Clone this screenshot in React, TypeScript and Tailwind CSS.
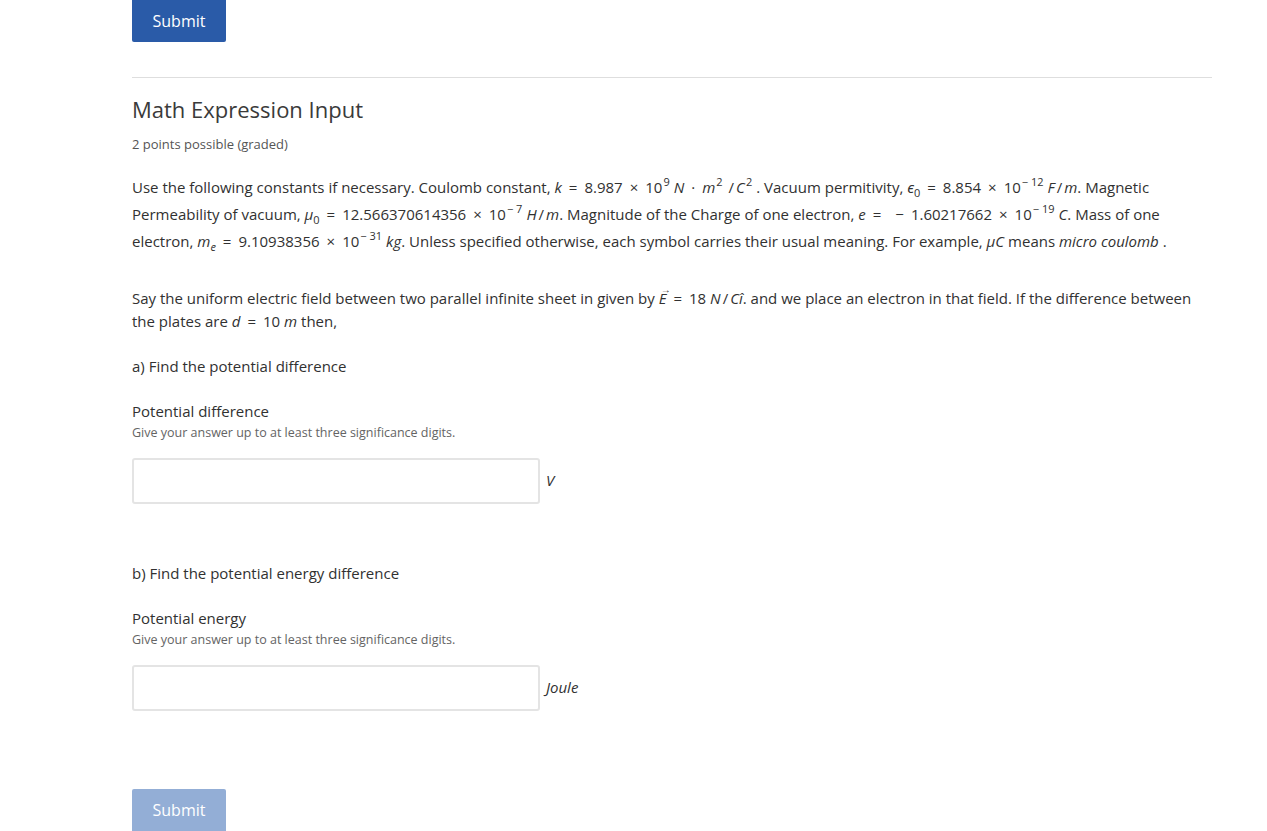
import React from 'react';

type C = { children: React.ReactNode };

const I: React.FC<C> = ({ children }) => <i className="italic">{children}</i>;
const Sup: React.FC<C> = ({ children }) => (
  <span className="inline-block text-[11px] leading-none align-[7px] ml-[1px] mr-[4px]">{children}</span>
);
const Sub: React.FC<C> = ({ children }) => (
  <span className="inline-block text-[11px] leading-none align-[-4px]">{children}</span>
);
const Op: React.FC<C> = ({ children }) => <span className="mx-[7px]">{children}</span>;
const Sl: React.FC = () => <span className="mx-[2px]">/</span>;
const Vec: React.FC<C> = ({ children }) => (
  <span className="relative inline-block italic">
    {children}
    <span className="absolute left-[2px] -top-[9px] text-[10px] not-italic">→</span>
  </span>
);

const AnswerField: React.FC<{ label: string; unit: string }> = ({ label, unit }) => (
  <div>
    <div className="text-[15px] leading-[20px] text-[#313131]">{label}</div>
    <div className="mt-[4px] text-[12.5px] leading-[16px] text-[#646464]">Give your answer up to at least three significance digits.</div>
    <div className="flex items-center mt-[17px]">
      <div className="w-[408px] h-[46px] border-2 border-[#e4e4e4] rounded-[3px] bg-white" />
      <span className="ml-[6px] text-[15px] italic text-[#313131]">{unit}</span>
    </div>
  </div>
);

const App: React.FC = () => {
  return (
    <div className="min-h-[831px] bg-white text-[#313131] font-['Open_Sans','Noto_Sans',sans-serif]">
      <div className="pl-[132px] pr-[55px]">
        <button className="w-[94px] h-[42px] bg-[#2a5ba8] text-white text-[16px] rounded-b-[2px]">Submit</button>
        <div className="mt-[35px] border-t border-[#dedede]" />

        <h2 className="mt-[16px] text-[22px] leading-[30px] text-[#3a3a3a]">Math Expression Input</h2>
        <div className="mt-[11px] text-[13px] text-[#555]">2 points possible (graded)</div>

        <p className="mt-[19px] text-[15px] leading-[27px]">
          Use the following constants if necessary. Coulomb constant, <I>k</I><Op>=</Op>8.987<Op>×</Op>10<Sup>9</Sup><I>N</I><Op>·</Op><I>m</I><Sup>2</Sup><Sl /><I>C</I><Sup>2</Sup>. Vacuum permitivity, <I>ϵ</I><Sub>0</Sub><Op>=</Op>8.854<Op>×</Op>10<Sup>− 12</Sup><I>F</I><Sl /><I>m</I>. Magnetic Permeability of vacuum, <I>μ</I><Sub>0</Sub><Op>=</Op>12.566370614356<Op>×</Op>10<Sup>− 7</Sup><I>H</I><Sl /><I>m</I>. Magnitude of the Charge of one electron, <I>e</I><Op>=</Op><Op>−</Op>1.60217662<Op>×</Op>10<Sup>− 19</Sup><I>C</I>. Mass of one electron, <I>m</I><Sub><I>e</I></Sub><Op>=</Op>9.10938356<Op>×</Op>10<Sup>− 31</Sup><I>kg</I>. Unless specified otherwise, each symbol carries their usual meaning. For example, <I>μC</I> means <I>micro coulomb</I> .
        </p>

        <p className="mt-[32px] text-[15px] leading-[23px]">
          Say the uniform electric field between two parallel infinite sheet in given by <Vec>E</Vec><Op>=</Op>18 <I>N</I><Sl /><I>Cî</I>. and we place an electron in that field. If the difference between the plates are <I>d</I><Op>=</Op>10 <I>m</I> then,
        </p>

        <p className="mt-[22px] text-[15px] leading-[23px]">a) Find the potential difference</p>

        <div className="mt-[23px]">
          <AnswerField label="Potential difference" unit="V" />
        </div>

        <p className="mt-[58px] text-[15px] leading-[23px]">b) Find the potential energy difference</p>

        <div className="mt-[23px]">
          <AnswerField label="Potential energy" unit="Joule" />
        </div>

        <button className="mt-[78px] w-[94px] h-[42px] bg-[#93aed6] text-white text-[16px] rounded-t-[2px]">Submit</button>
      </div>
    </div>
  );
};

export default App;
